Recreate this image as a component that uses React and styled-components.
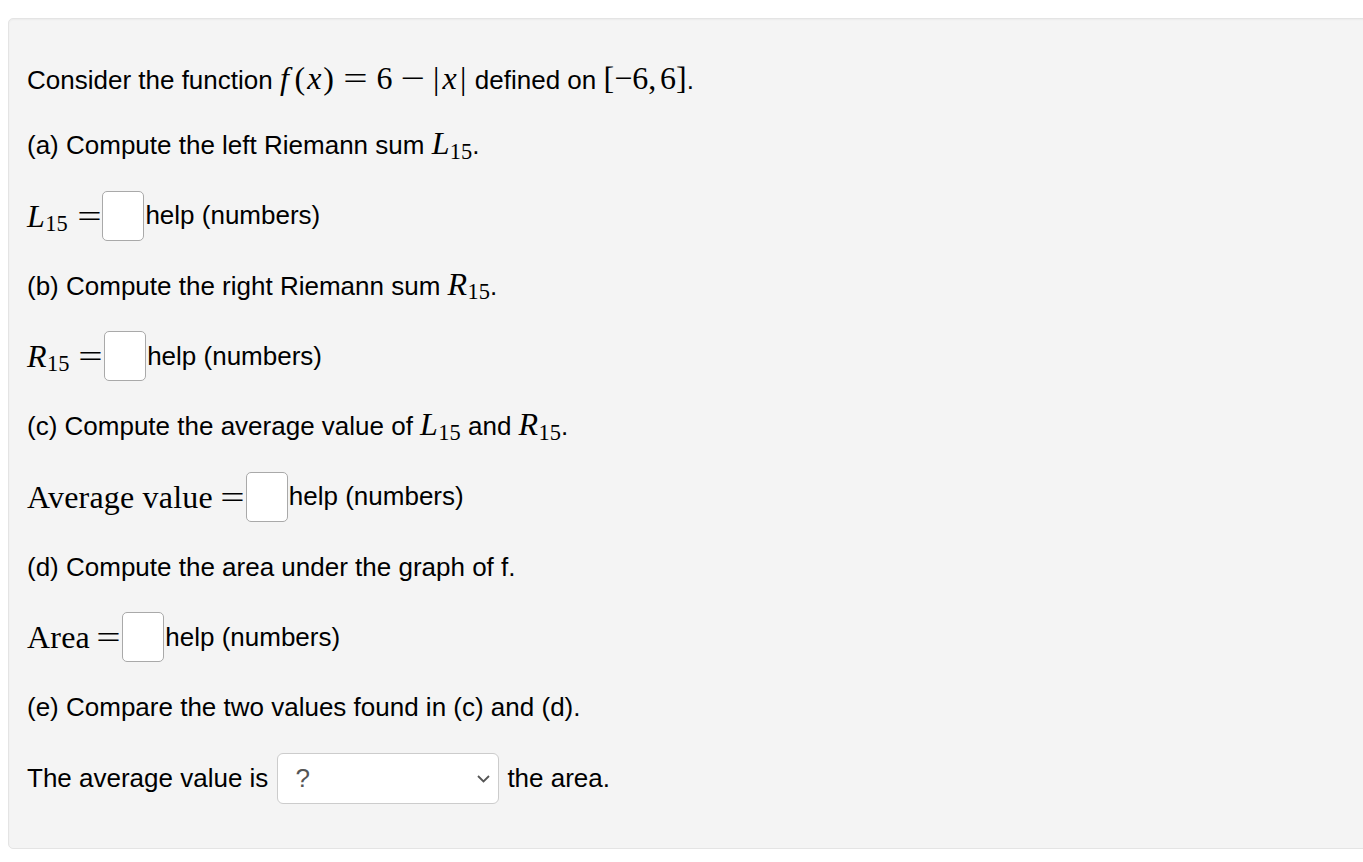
import React from "react";
import styled, { createGlobalStyle } from "styled-components";

const GlobalStyle = createGlobalStyle`
  html, body {
    margin: 0;
    padding: 0;
    background: #ffffff;
    overflow: hidden;
  }
  body {
    font-family: "Liberation Sans", Arial, sans-serif;
    color: #000000;
  }
`;

const Panel = styled.div`
  box-sizing: border-box;
  margin: 18px 0 0 8px;
  width: 1370px;
  padding: 41px 18px 44px;
  background: #f4f4f4;
  border: 1px solid #e4e4e4;
  border-radius: 5px;
  box-shadow: inset 0 1px 2px rgba(0, 0, 0, 0.04);
  display: flex;
  flex-direction: column;
  gap: 20.25px;
`;

// plain text paragraph line
const Line = styled.div`
  height: ${({ $h }) => $h || 50}px;
  line-height: ${({ $h }) => $h || 50}px;
  font-size: 26px;
  white-space: nowrap;
`;

// a line holding an answer field
const AnswerRow = styled.div`
  display: flex;
  align-items: center;
  height: ${({ $h }) => $h || 50}px;
  font-size: 26px;
  white-space: nowrap;
`;

const Math = styled.span`
  font-family: "Liberation Serif", "Times New Roman", serif;
  font-size: 32px;
  line-height: 1;
  white-space: nowrap;
`;

const Var = styled.i`
  font-style: italic;
  margin: 0 ${({ $r }) => $r || 0}em 0 ${({ $l }) => $l || 0}em;
`;

const Bar = styled.span`
  margin: 0 0.04em;
`;

const Thin = styled.span`
  display: inline-block;
  width: 0.12em;
`;

const Sub = styled.span`
  font-size: 70%;
  font-style: normal;
  position: relative;
  top: 0.2em;
  margin-left: 0.02em;
`;

// relation / binary operator, sized like the TeX glyphs (0.778em wide)
const Op = styled.span`
  display: inline-block;
  width: 0.778em;
  text-align: center;
  margin: 0 ${({ $r }) => ($r === undefined ? 0.278 : $r)}em 0 ${({ $l }) => ($l === undefined ? 0.278 : $l)}em;
  transform: scaleX(1.35);
`;

const Word = styled.span`
  letter-spacing: 0.2px;
`;

const Box = styled.input`
  box-sizing: border-box;
  width: 42px;
  height: 50px;
  margin: 0 1px 0 1px;
  padding: 0;
  background: #ffffff;
  border: 1px solid #a9a9a9;
  border-radius: 5px;
  font-size: 20px;
  outline: none;
`;

const Help = styled.span`
  font-size: 26px;
  color: #000000;
`;

const SelectWrap = styled.span`
  position: relative;
  display: inline-block;
  margin: 0 8px 0 9px;
`;

const Select = styled.select`
  appearance: none;
  -webkit-appearance: none;
  box-sizing: border-box;
  width: 222px;
  height: 51px;
  padding: 0 0 0 17px;
  background: #ffffff;
  border: 1px solid #cccccc;
  border-radius: 6px;
  font-family: "Liberation Sans", Arial, sans-serif;
  font-size: 26px;
  color: #555555;
  outline: none;
`;

const Chevron = styled.svg`
  position: absolute;
  right: 9px;
  top: 22px;
  pointer-events: none;
`;

const L15 = () => (
  <>
    <Var>L</Var>
    <Sub>15</Sub>
  </>
);

const R15 = () => (
  <>
    <Var>R</Var>
    <Sub>15</Sub>
  </>
);

export default function App() {
  return (
    <>
      <GlobalStyle />
      <Panel>
        <Line $h={40}>
          Consider the function{" "}
          <Math>
            <Var $r={0.18}>f</Var>(<Var $l={0.06} $r={0.06}>x</Var>)<Op>=</Op>6
            <Op $l={0.222} $r={0.222}>−</Op>
            <Bar>|</Bar>
            <Var $l={0.06} $r={0.06}>x</Var>
            <Bar>|</Bar>
          </Math>{" "}
          defined on{" "}
          <Math>
            [−6,<Thin />6]
          </Math>
          .
        </Line>

        <Line>
          (a) Compute the left Riemann sum{" "}
          <Math>
            <L15 />
          </Math>
          .
        </Line>

        <AnswerRow>
          <Math>
            <L15 />
            <Op $r={0}>=</Op>
          </Math>
          <Box type="text" />
          <Help>help (numbers)</Help>
        </AnswerRow>

        <Line>
          (b) Compute the right Riemann sum{" "}
          <Math>
            <R15 />
          </Math>
          .
        </Line>

        <AnswerRow>
          <Math>
            <R15 />
            <Op $r={0}>=</Op>
          </Math>
          <Box type="text" />
          <Help>help (numbers)</Help>
        </AnswerRow>

        <Line>
          (c) Compute the average value of{" "}
          <Math>
            <L15 />
          </Math>{" "}
          and{" "}
          <Math>
            <R15 />
          </Math>
          .
        </Line>

        <AnswerRow>
          <Math>
            <Word>Average value</Word>
            <Op $l={0.22} $r={0}>=</Op>
          </Math>
          <Box type="text" />
          <Help>help (numbers)</Help>
        </AnswerRow>

        <Line>(d) Compute the area under the graph of f.</Line>

        <AnswerRow>
          <Math>
            <Word>Area</Word>
            <Op $l={0.2} $r={0}>=</Op>
          </Math>
          <Box type="text" />
          <Help>help (numbers)</Help>
        </AnswerRow>

        <Line>(e) Compare the two values found in (c) and (d).</Line>

        <AnswerRow $h={51}>
          <span>The average value is</span>
          <SelectWrap>
            <Select defaultValue="?">
              <option value="?">?</option>
              <option value="less">less than</option>
              <option value="equal">equal to</option>
              <option value="greater">greater than</option>
            </Select>
            <Chevron width="13" height="8" viewBox="0 0 13 8">
              <path d="M1 1 L6.5 6.5 L12 1" fill="none" stroke="#555555" strokeWidth="1.8" />
            </Chevron>
          </SelectWrap>
          <span>the area.</span>
        </AnswerRow>
      </Panel>
    </>
  );
}
